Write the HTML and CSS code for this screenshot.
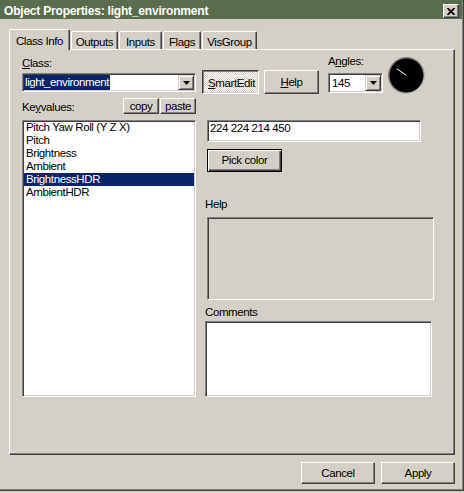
FILE: index.html
```html
<!DOCTYPE html>
<html>
<head>
<meta charset="utf-8">
<title>Object Properties</title>
<link rel="stylesheet" href="styles.css">
</head>
<body>
<div class="window">
  <div class="titlebar">
    <span class="title">Object Properties: light_environment</span>
    <span class="close"><svg width="8" height="7" viewBox="0 0 8 7"><path d="M0.5 0 L7.5 7 M7.5 0 L0.5 7" stroke="#000" stroke-width="1.6" fill="none"/></svg></span>
  </div>
  <div class="tabs">
    <div class="tab active t-class">Class Info</div>
    <div class="tab t-out">Outputs</div>
    <div class="tab t-in">Inputs</div>
    <div class="tab t-flags">Flags</div>
    <div class="tab t-vis">VisGroup</div>
  </div>
  <div class="panel">
    <div class="toprow">
      <div class="classgroup">
        <div class="label"><u>C</u>lass:</div>
        <div class="combo combo-class">
          <span class="sel">light_environment</span>
          <span class="dropbtn"><svg width="7" height="4" viewBox="0 0 7 4"><polygon points="0,0 7,0 3.5,4" fill="#000"/></svg></span>
        </div>
      </div>
      <div class="btn toggled smartedit"><span><u>S</u>martEdit</span></div>
      <div class="btn helpbtn"><span><u>H</u>elp</span></div>
      <div class="anglesgroup">
        <div class="label">A<u>n</u>gles:</div>
        <div class="combo combo-angles">
          <span class="val">145</span>
          <span class="dropbtn"><svg width="7" height="4" viewBox="0 0 7 4"><polygon points="0,0 7,0 3.5,4" fill="#000"/></svg></span>
        </div>
      </div>
      <svg class="dial" width="37" height="37" viewBox="0 0 37 37">
        <defs>
          <linearGradient id="ring" x1="0" y1="0" x2="1" y2="1">
            <stop offset="0" stop-color="#6f6f6f"/>
            <stop offset="0.5" stop-color="#808080"/>
            <stop offset="1" stop-color="#e8e8e8"/>
          </linearGradient>
        </defs>
        <circle cx="18.5" cy="18.5" r="18.5" fill="url(#ring)"/>
        <circle cx="18.5" cy="18.5" r="17" fill="#000"/>
        <line x1="18.5" y1="18.5" x2="8.7" y2="11.6" stroke="#fff" stroke-width="1"/>
      </svg>
    </div>
    <div class="keyrow">
      <div class="label">Ke<u>y</u>values:</div>
      <div class="btn small copy">copy</div>
      <div class="btn small paste">paste</div>
    </div>
    <div class="body">
      <div class="list">
        <div class="item">Pitch Yaw Roll (Y Z X)</div>
        <div class="item">Pitch</div>
        <div class="item">Brightness</div>
        <div class="item">Ambient</div>
        <div class="item selected">BrightnessHDR</div>
        <div class="item">AmbientHDR</div>
      </div>
      <div class="rightcol">
        <div class="textbox">224 224 214 450</div>
        <div class="btn default pick">Pick color</div>
        <div class="label sublabel help-label">Help</div>
        <div class="helpbox"></div>
        <div class="label sublabel comments-label">Comments</div>
        <div class="commentbox"></div>
      </div>
    </div>
  </div>
  <div class="footer">
    <div class="btn footbtn">Cancel</div>
    <div class="btn footbtn">Apply</div>
  </div>
</div>
</body>
</html>
```

FILE: styles.css
```css
html, body {
  margin: 0;
  padding: 0;
  background: #d4d0c8;
}

body {
  font-family: "Liberation Sans", Arial, sans-serif;
  font-size: 11.5px;
  letter-spacing: -0.4px;
  color: #000;
}

u {
  text-decoration: underline;
  text-underline-offset: 1px;
}

.window {
  width: 464px;
  height: 491px;
  box-sizing: border-box;
  background: #d4d0c8;
  box-shadow: inset -1px -1px #404040, inset -2px -2px #808080;
  display: flex;
  flex-direction: column;
}

/* title bar */
.titlebar {
  width: 462px;
  height: 19px;
  flex: none;
  background: #5a6c4e;
  display: flex;
  align-items: flex-start;
  overflow: hidden;
}

.title {
  font-weight: bold;
  font-size: 12px;
  letter-spacing: -0.2px;
  color: #fff;
  line-height: 19px;
  margin-top: 2px;
  padding-left: 4px;
  white-space: nowrap;
}

.close {
  margin-left: auto;
  margin-right: 3px;
  margin-top: 4px;
  width: 16px;
  height: 14px;
  box-sizing: border-box;
  background: #d4d0c8;
  border: 1px solid;
  border-color: #fff #404040 #404040 #fff;
  box-shadow: inset -1px -1px #808080;
  display: flex;
  align-items: center;
  justify-content: center;
}

.close svg {
  display: block;
  margin-left: -1px;
}

/* tabs */
.tabs {
  flex: none;
  height: 20px;
  margin-top: 10px;
  padding-left: 9px;
  display: flex;
  align-items: flex-end;
}

.tab {
  box-sizing: border-box;
  height: 18px;
  margin-left: 1px;
  padding-top: 4px;
  line-height: 13px;
  text-align: center;
  white-space: nowrap;
  background: #d4d0c8;
  border: 1px solid;
  border-bottom: none;
  border-color: #fff #404040 transparent #fff;
  border-radius: 2px 2px 0 0;
  box-shadow: inset -1px 0 #808080;
}

.tab.active {
  height: 21px;
  margin-left: 0;
  margin-bottom: -1px;
  padding-top: 5px;
  position: relative;
  z-index: 1;
}

.t-class { width: 61px; }
.t-out { width: 47px; }
.t-in { width: 43px; }
.t-flags { width: 38px; }
.t-vis { width: 55px; }

/* panel */
.panel {
  flex: none;
  margin-left: 9px;
  width: 446px;
  height: 406px;
  box-sizing: border-box;
  border: 1px solid;
  border-color: #fff #404040 #404040 #fff;
  box-shadow: inset -1px -1px #808080;
  padding: 5px 0 0 12px;
}

.label {
  height: 13px;
  line-height: 13px;
  white-space: nowrap;
}

.toprow {
  display: flex;
  align-items: flex-start;
  height: 39px;
}

.classgroup {
  width: 174px;
  padding-top: 2px;
}

.combo {
  box-sizing: border-box;
  background: #fff;
  border: 1px solid;
  border-color: #808080 #fff #fff #808080;
  box-shadow: inset 1px 1px #404040, inset -1px -1px #d4d0c8;
  padding: 1px;
  display: flex;
  align-items: stretch;
}

.combo-class {
  margin-top: 3px;
  height: 19px;
}

.sel {
  background: #0a246a;
  color: #fff;
  line-height: 15px;
  padding: 0 1px 0 1px;
  white-space: nowrap;
}

.dropbtn {
  margin-left: auto;
  width: 16px;
  box-sizing: border-box;
  background: #d4d0c8;
  border: 1px solid;
  border-color: #d4d0c8 #404040 #404040 #d4d0c8;
  box-shadow: inset 1px 1px #fff, inset -1px -1px #808080;
  display: flex;
  align-items: center;
  justify-content: center;
}

.dropbtn svg {
  display: block;
}

.btn {
  box-sizing: border-box;
  background: #d4d0c8;
  border: 1px solid;
  border-color: #fff #404040 #404040 #fff;
  box-shadow: inset -1px -1px #808080;
  display: flex;
  align-items: center;
  justify-content: center;
  line-height: 13px;
  white-space: nowrap;
}

.toggled {
  border-color: #404040 #fff #fff #404040;
  box-shadow: inset 1px 1px #808080, inset -1px -1px #d4d0c8;
  background: repeating-conic-gradient(#ffffff 0 25%, #d4d0c8 0 50%) 0 0 / 2px 2px;
}

.toggled span {
  position: relative;
  top: 1px;
  left: 1px;
}

.smartedit {
  margin-left: 6px;
  margin-top: 15px;
  width: 57px;
  height: 24px;
}

.helpbtn {
  margin-left: 5px;
  margin-top: 15px;
  width: 55px;
  height: 24px;
}

.anglesgroup {
  margin-left: 9px;
  width: 55px;
}

.combo-angles {
  margin-top: 5px;
  height: 20px;
}

.val {
  line-height: 16px;
  padding-left: 2px;
}

.dial {
  display: block;
  margin-left: 5px;
  margin-top: 2px;
}

/* keyvalues row */
.keyrow {
  margin-top: 4px;
  width: 174px;
  height: 16px;
  display: flex;
  align-items: flex-start;
}

.keyrow .label {
  margin-top: 3px;
}

.small {
  width: 36px;
  height: 16px;
}

.copy {
  margin-left: auto;
}

.paste {
  margin-left: 1px;
}

/* body */
.body {
  margin-top: 6px;
  display: flex;
  align-items: flex-start;
}

.list {
  width: 174px;
  height: 277px;
  box-sizing: border-box;
  background: #fff;
  border: 1px solid;
  border-color: #808080 #fff #fff #808080;
  box-shadow: inset 1px 1px #404040, inset -1px -1px #d4d0c8;
}

.item {
  margin: 0 1px;
  height: 13px;
  line-height: 13px;
  padding-left: 2px;
  white-space: nowrap;
}

.item.selected {
  background: #0a246a;
  color: #fff;
}

.rightcol {
  margin-left: 11px;
  width: 227px;
  display: flex;
  flex-direction: column;
  align-items: flex-start;
}

.textbox {
  width: 214px;
  height: 22px;
  box-sizing: border-box;
  background: #fff;
  border: 1px solid;
  border-color: #808080 #fff #fff #808080;
  box-shadow: inset 1px 1px #404040, inset -1px -1px #d4d0c8;
  padding: 1px 2px;
  line-height: 13px;
}

.default {
  border-color: #000;
  box-shadow: inset 1px 1px #fff, inset -1px -1px #404040, inset -2px -2px #808080;
}

.pick {
  margin-top: 7px;
  width: 75px;
  height: 23px;
}

.sublabel {
  margin-left: -2px;
}

.help-label {
  margin-top: 26px;
}

.helpbox {
  margin-top: 6px;
  width: 227px;
  height: 83px;
  box-sizing: border-box;
  background: #d4d0c8;
  border: 1px solid;
  border-color: #808080 #fff #fff #808080;
  box-shadow: inset 1px 1px #404040, inset -1px -1px #d4d0c8;
}

.comments-label {
  margin-top: 6px;
}

.commentbox {
  margin-top: 2px;
  margin-left: -2px;
  width: 227px;
  height: 76px;
  box-sizing: border-box;
  background: #fff;
  border: 1px solid;
  border-color: #808080 #fff #fff #808080;
  box-shadow: inset 1px 1px #404040, inset -1px -1px #d4d0c8;
}

/* footer */
.footer {
  flex: none;
  margin-top: 7px;
  padding-right: 9px;
  display: flex;
  justify-content: flex-end;
  gap: 6px;
}

.footbtn {
  width: 74px;
  height: 22px;
}
```
